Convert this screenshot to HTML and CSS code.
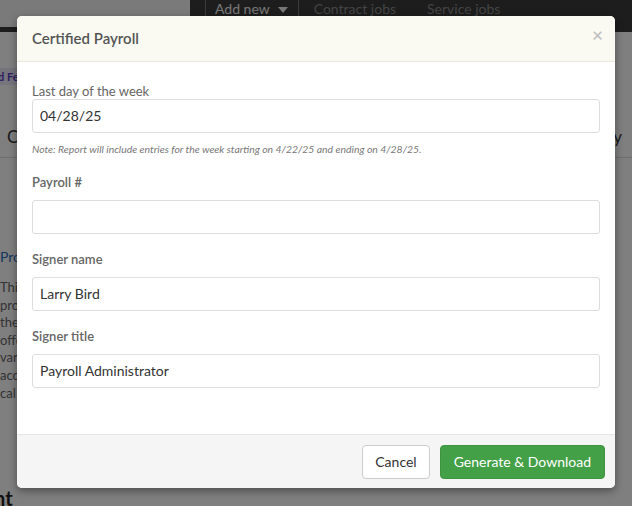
FILE: index.html
```html
<!DOCTYPE html>
<html>
<head>
<meta charset="utf-8">
<link rel="stylesheet" href="styles.css">
</head>
<body>
<div class="page">
  <header class="topbar">
    <div class="brand"></div>
    <nav class="nav">
      <span class="nav-item add">Add new <span class="caret"></span></span>
      <span class="nav-item">Contract jobs</span>
      <span class="nav-item">Service jobs</span>
    </nav>
  </header>
  <div class="content">
    <div class="tag">d Fe</div>
    <div class="tabs"><span class="tab">C</span><span class="tab right">y</span></div>
    <div class="section">
      <a class="link">Pro</a>
      <p class="para">Thi<br>pro<br>the<br>offe<br>var<br>acc<br>cal</p>
      <h2 class="heading">nt</h2>
    </div>
  </div>
</div>
<div class="overlay"></div>
<div class="modal">
  <div class="modal-header">
    <h3 class="modal-title">Certified Payroll</h3>
    <span class="close">&times;</span>
  </div>
  <div class="modal-body">
    <div class="group first">
      <label class="label light">Last day of the week</label>
      <div class="input">04/28/25</div>
      <div class="note">Note: Report will include entries for the week starting on 4/22/25 and ending on 4/28/25.</div>
    </div>
    <div class="group">
      <label class="label">Payroll #</label>
      <div class="input"></div>
    </div>
    <div class="group">
      <label class="label">Signer name</label>
      <div class="input">Larry Bird</div>
    </div>
    <div class="group">
      <label class="label">Signer title</label>
      <div class="input">Payroll Administrator</div>
    </div>
  </div>
  <div class="modal-footer">
    <button class="btn btn-default">Cancel</button>
    <button class="btn btn-success">Generate &amp; Download</button>
  </div>
</div>
</body>
</html>
```
FILE: styles.css
```css
* { box-sizing: border-box; }
html, body { margin: 0; padding: 0; }
body {
  width: 632px;
  height: 506px;
  overflow: hidden;
  font-family: Lato, "Liberation Sans", sans-serif;
  background: #fff;
  position: relative;
}
.page { width: 632px; height: 506px; overflow: hidden; }
.topbar {
  height: 32px;
  background: #3a3a3a;
  display: flex;
  align-items: flex-start;
}
.brand { width: 190px; height: 27px; background: #f4f4f4; }
.nav { display: flex; height: 32px; align-items: flex-start; padding-left: 15px; }
.nav-item {
  color: #888;
  font-size: 14px;
  line-height: 18px;
  padding: 0 16px 0 15px;
  height: 32px;
}
.nav-item.add {
  color: #eee;
  border-left: 1px solid #777;
  border-right: 1px solid #777;
  padding: 0 10px 0 9px;
  display: flex;
  gap: 8px;
  align-items: flex-start;
}
.caret {
  margin-top: 7px;
  width: 0; height: 0;
  border-left: 5px solid transparent;
  border-right: 5px solid transparent;
  border-top: 6px solid #eee;
}
.content { padding: 33px 0 0 0; }
.tag {
  display: inline-block;
  background: #ece8fb;
  color: #5b3fc4;
  font-size: 11px;
  font-weight: 700;
  padding: 2px 4px;
  margin-left: -6px;
}
.tabs {
  display: flex;
  justify-content: space-between;
  margin-top: 41px;
  padding: 0 10px 10px 7px;
  border-bottom: 1px solid #ddd;
  font-size: 17px;
  color: #333;
}
.section { padding-top: 90px; }
.link { color: #2a6fc0; font-size: 14px; display: block; line-height: 18px; }
.para { margin: 13px 0 0; color: #666; font-size: 13px; line-height: 17.6px; }
.heading { margin: 84px 0 0 -6px; font-size: 20px; font-weight: 700; color: #222; }

.overlay {
  position: absolute;
  inset: 0;
  background: rgba(0,0,0,0.5);
}
.modal {
  position: absolute;
  left: 17px;
  top: 16px;
  width: 598px;
  height: 472px;
  background: #fff;
  border-radius: 5px;
  overflow: hidden;
  box-shadow: 0 3px 9px rgba(0,0,0,0.4);
  display: flex;
  flex-direction: column;
}
.modal-header {
  height: 46px;
  background: #fafaf2;
  border-bottom: 1px solid #e8e8e0;
  display: flex;
  align-items: center;
  justify-content: space-between;
  padding: 0 12px 0 15px;
}
.modal-title {
  margin: 0;
  font-size: 15px;
  font-weight: 600;
  color: #555;
  padding-bottom: 1px;
}
.close {
  color: #c0c0c0;
  font-size: 19px;
  line-height: 1;
  margin-top: -8px;
  font-weight: 600;
}
.modal-body {
  flex: 1;
  padding: 21px 15px 0;
}
.group { margin-bottom: 16px; }
.label {
  display: block;
  font-size: 13px;
  line-height: 18px;
  color: #666;
  font-weight: 600;
  margin-bottom: 9px;
}
.label.light { font-weight: 400; line-height: 16px; margin-bottom: 0; color: #666; }
.input {
  height: 34px;
  border: 1px solid #ddd;
  border-radius: 3px;
  padding: 0 7px;
  font-size: 14px;
  line-height: 32px;
  color: #333;
}
.note {
  margin-top: 9px;
  font-size: 10.4px;
  line-height: 14px;
  font-style: italic;
  color: #777;
}
.group.first { margin-bottom: 17px; }
.modal-footer {
  height: 54px;
  background: #f5f5f5;
  border-top: 1px solid #e5e5e5;
  display: flex;
  justify-content: flex-end;
  align-items: center;
  gap: 10px;
  padding: 0 10px;
}
.btn {
  height: 34px;
  font-family: inherit;
  font-size: 14px;
  border-radius: 4px;
  padding: 0 13px;
  cursor: pointer;
}
.btn-default { background: #fff; border: 1px solid #ccc; color: #333; padding: 0 12px; }
.btn-success { background: #43a047; border: 1px solid #3d933f; color: #fff; }
```
